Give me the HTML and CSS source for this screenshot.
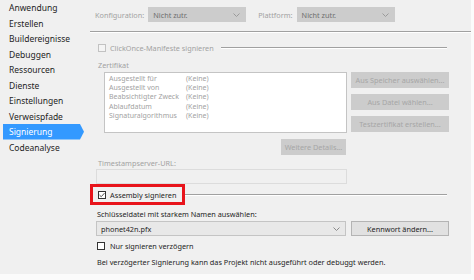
FILE: index.html
```html
<!DOCTYPE html>
<html lang="de">
<head>
    <meta charset="UTF-8">
    <title>Signierung</title>
    <link rel="stylesheet" href="styles.css">
</head>
<body>
    <div class="window">
        <nav class="sidebar">
            <a class="nav-item">Anwendung</a>
            <a class="nav-item">Erstellen</a>
            <a class="nav-item">Buildereignisse</a>
            <a class="nav-item">Debuggen</a>
            <a class="nav-item">Ressourcen</a>
            <a class="nav-item">Dienste</a>
            <a class="nav-item">Einstellungen</a>
            <a class="nav-item">Verweispfade</a>
            <a class="nav-item active">Signierung</a>
            <a class="nav-item">Codeanalyse</a>
        </nav>

        <main class="main">
            <div class="config-row">
                <span class="label-disabled">Konfiguration:</span>
                <div class="select disabled">
                    <span>Nicht zutr.</span>
                    <svg class="chevron" width="7" height="4" viewBox="0 0 7 4"><path d="M0.5 0.5 L3.5 3.5 L6.5 0.5" fill="none" stroke="#9a9a9a" stroke-width="1"/></svg>
                </div>
                <span class="label-disabled platform-label">Plattform:</span>
                <div class="select disabled">
                    <span>Nicht zutr.</span>
                    <svg class="chevron" width="7" height="4" viewBox="0 0 7 4"><path d="M0.5 0.5 L3.5 3.5 L6.5 0.5" fill="none" stroke="#9a9a9a" stroke-width="1"/></svg>
                </div>
            </div>

            <div class="separator"></div>

            <div class="group-row clickonce">
                <span class="checkbox disabled"></span>
                <span class="label-disabled">ClickOnce-Manifeste signieren</span>
                <span class="group-line"></span>
            </div>

            <div class="label-disabled section-label">Zertifikat</div>

            <div class="cert-block">
                <div class="cert-left">
                    <div class="cert-list">
                        <div class="cert-row"><span class="cert-key">Ausgestellt für</span><span>(Keine)</span></div>
                        <div class="cert-row"><span class="cert-key">Ausgestellt von</span><span>(Keine)</span></div>
                        <div class="cert-row"><span class="cert-key">Beabsichtigter Zweck</span><span>(Keine)</span></div>
                        <div class="cert-row"><span class="cert-key">Ablaufdatum</span><span>(Keine)</span></div>
                        <div class="cert-row"><span class="cert-key">Signaturalgorithmus</span><span>(Keine)</span></div>
                    </div>
                    <button class="button disabled details-button">Weitere Details...</button>
                </div>
                <div class="cert-buttons">
                    <button class="button disabled">Aus Speicher auswählen...</button>
                    <button class="button disabled">Aus Datei wählen...</button>
                    <button class="button disabled">Testzertifikat erstellen...</button>
                </div>
            </div>

            <div class="label-disabled timestamp-label">Timestampserver-URL:</div>
            <div class="text-input disabled"></div>

            <div class="group-row assembly">
                <div class="highlight">
                    <span class="checkbox checked">
                        <svg width="7" height="6" viewBox="0 0 7 6"><path d="M0.6 3 L2.6 5 L6.4 0.8" fill="none" stroke="#333" stroke-width="1"/></svg>
                    </span>
                    <span class="label">Assembly signieren</span>
                </div>
                <span class="group-line"></span>
            </div>

            <div class="label key-label">Schlüsseldatei mit starkem Namen auswählen:</div>
            <div class="key-row">
                <div class="select key-select">
                    <span>phonet42n.pfx</span>
                    <svg class="chevron" width="7" height="4" viewBox="0 0 7 4"><path d="M0.5 0.5 L3.5 3.5 L6.5 0.5" fill="none" stroke="#8a8a8a" stroke-width="1"/></svg>
                </div>
                <button class="button">Kennwort ändern...</button>
            </div>

            <div class="delay-row">
                <span class="checkbox"></span>
                <span class="label">Nur signieren verzögern</span>
            </div>

            <div class="label note">Bei verzögerter Signierung kann das Projekt nicht ausgeführt oder debuggt werden.</div>
        </main>
    </div>
</body>
</html>
```

FILE: styles.css
```css
:root {
    --window-bg: #f0f0f0;
    --text: #1e1e1e;
    --text-disabled: #a2a2a2;
    --select-disabled: #cccccc;
    --border: #c4c4c4;
    --accent: #3399ff;
    --highlight: #e8141b;
}

* {
    margin: 0;
    padding: 0;
    box-sizing: border-box;
}

body {
    font-family: "Noto Sans", "Open Sans", sans-serif;
    font-size: 7.3px;
    white-space: nowrap;
    color: var(--text);
    background: #fbfbfb;
    width: 474px;
    height: 280px;
    overflow: hidden;
}

.window {
    width: 471px;
    height: 274px;
    background: var(--window-bg);
    display: flex;
}

/* Sidebar */

.sidebar {
    width: 88px;
    display: flex;
    flex-direction: column;
}

.nav-item {
    display: block;
    height: 15.5px;
    line-height: 15.5px;
    padding-left: 9px;
    font-size: 8.5px;
    color: #1e1e1e;
}

.nav-item.active {
    margin-left: 3px;
    padding-left: 6px;
    width: 81px;
    background: var(--accent);
    color: #fff;
    clip-path: polygon(0 0, 77px 0, 81px 50%, 77px 100%, 0 100%);
}

/* Main */

.main {
    flex: 1;
    display: flex;
    flex-direction: column;
}

.label-disabled {
    color: var(--text-disabled);
}

.label {
    color: var(--text);
}

.config-row {
    display: flex;
    align-items: center;
    height: 15px;
    margin-top: 7px;
    padding-left: 7px;
}

.config-row .select {
    margin-left: 4px;
    width: 98px;
}

.platform-label {
    margin-left: 12px;
}

.select {
    height: 15px;
    display: flex;
    align-items: center;
    justify-content: space-between;
    padding: 0 5px 0 4px;
    border: 1px solid var(--border);
    background: #e8e8e8;
    color: #1e1e1e;
}

.select.disabled {
    background: var(--select-disabled);
    border-color: var(--select-disabled);
    color: #6e6e6e;
}

.separator {
    margin-top: 9px;
    margin-left: 2px;
    height: 2px;
    border-top: 1px solid #a0a0a0;
    border-bottom: 1px solid #ffffff;
}

.group-row {
    display: flex;
    align-items: center;
}

.group-line {
    flex: none;
    height: 2px;
    border-top: 1px solid #a0a0a0;
    border-bottom: 1px solid #ffffff;
}

.clickonce {
    margin-top: 10px;
    height: 10px;
    padding-left: 10px;
}

.clickonce .checkbox {
    margin-right: 4px;
}

.clickonce .group-line {
    margin-left: 7px;
    flex: 1;
    margin-right: 24px;
}

.checkbox {
    width: 8px;
    height: 8px;
    border: 1px solid #333;
    background: #fff;
    display: inline-flex;
    align-items: center;
    justify-content: center;
    flex: none;
}

.checkbox.disabled {
    border-color: #c2c2c2;
    background: #f4f4f4;
}

.section-label {
    margin-top: 7px;
    padding-left: 10px;
    line-height: 10px;
}

/* Certificate */

.cert-block {
    display: flex;
    gap: 4px;
    margin-top: 2px;
    padding-left: 16px;
}

.cert-left {
    width: 243px;
    display: flex;
    flex-direction: column;
    align-items: flex-end;
}

.cert-list {
    width: 100%;
    height: 61px;
    background: #fff;
    border: 1px solid var(--border);
    padding: 1px 0 0 4px;
    font-size: 7px;
    color: var(--text-disabled);
}

.cert-row {
    display: flex;
    height: 9.2px;
    line-height: 9.2px;
}

.cert-key {
    width: 77px;
}

.cert-buttons {
    display: flex;
    flex-direction: column;
    gap: 6px;
}

.button {
    width: 98px;
    height: 16px;
    font: inherit;
    color: var(--text);
    background: #e1e1e1;
    border: 1px solid #b4b4b4;
}

.button.disabled {
    background: #cccccc;
    border-color: #cccccc;
    color: #a6a6a6;
}

.details-button {
    width: 65px;
    margin-top: 6px;
    margin-right: 1px;
}

.timestamp-label {
    margin-top: 3px;
    padding-left: 10px;
    line-height: 10px;
}

.text-input {
    margin-top: 1px;
    margin-left: 8px;
    width: 251px;
    height: 15px;
    border: 1px solid #dcdcdc;
    background: #f0f0f0;
}

/* Assembly signing */

.assembly {
    height: 21px;
}

.highlight {
    margin-left: 2px;
    width: 95px;
    height: 21px;
    border: 3px solid var(--highlight);
    display: flex;
    align-items: center;
    padding-left: 5px;
    gap: 4px;
}

.assembly .group-line {
    flex: 1;
    margin-right: 24px;
}

.key-label {
    margin-top: 4px;
    padding-left: 9px;
    line-height: 10px;
}

.key-row {
    display: flex;
    gap: 5px;
    margin-top: 2px;
    padding-left: 8px;
}

.key-select {
    width: 250px;
}

.key-row .button {
    height: 15px;
}

.delay-row {
    display: flex;
    align-items: center;
    gap: 5px;
    margin-top: 5px;
    height: 10px;
    padding-left: 9px;
}

.note {
    margin-top: 6px;
    padding-left: 9px;
    line-height: 10px;
}
```
